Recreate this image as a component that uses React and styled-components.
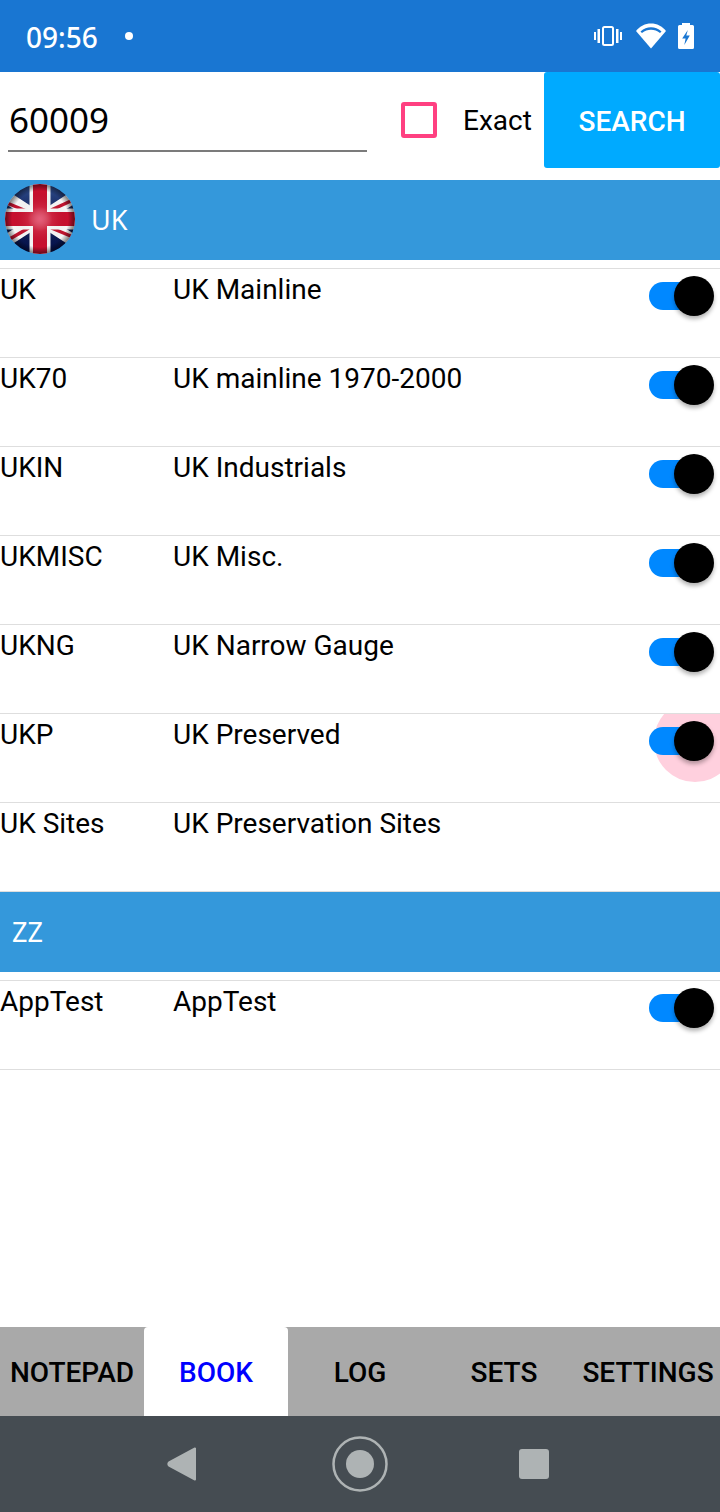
import React from "react";
import styled, { createGlobalStyle } from "styled-components";

const GlobalStyle = createGlobalStyle`
    html, body { margin: 0; padding: 0; background: #fff; }
    body { font-family: Roboto, sans-serif; color: #000; }
`;

const Screen = styled.div`
    width: 720px;
    height: 1512px;
    display: flex;
    flex-direction: column;
    overflow: hidden;
`;

const StatusBar = styled.div`
    height: 72px;
    flex: none;
    background: #1976d2;
    color: #fff;
    display: flex;
    align-items: center;
    padding: 0 26px 0 26px;
`;
const Clock = styled.span`
    font-family: "Noto Sans", sans-serif;
    font-size: 28px;
    font-weight: 500;
    line-height: 1;
    margin-top: 2px;
`;
const Dot = styled.span`
    width: 8px;
    height: 8px;
    border-radius: 50%;
    background: #fff;
    margin-left: 27px;
`;
const StatusIcons = styled.div`
    margin-left: auto;
    display: flex;
    align-items: center;
    gap: 14px;
`;

const SearchRow = styled.div`
    height: 96px;
    flex: none;
    display: flex;
    align-items: stretch;
    margin-bottom: 12px;
`;
const SearchField = styled.div`
    width: 359px;
    margin-left: 8px;
    height: 80px;
    border-bottom: 2px solid #7b7b7b;
    box-sizing: border-box;
    font-family: "Noto Sans", sans-serif;
    font-size: 35px;
    line-height: 96px;
    padding-left: 1px;
`;
const Check = styled.div`
    width: 36px;
    height: 36px;
    box-sizing: border-box;
    border: 4px solid #ff4081;
    border-radius: 3px;
    margin: 30px 0 0 34px;
`;
const ExactLabel = styled.span`
    font-size: 28px;
    line-height: 98px;
    margin-left: 26px;
`;
const SearchButton = styled.div`
    margin-left: auto;
    width: 176px;
    background: #00aaff;
    color: #fff;
    border-radius: 3px;
    font-size: 28px;
    font-weight: 500;
    display: flex;
    align-items: center;
    justify-content: center;
    padding-top: 2px;
    box-sizing: border-box;
`;

const GroupHeader = styled.div`
    height: 80px;
    flex: none;
    box-sizing: border-box;
    background: #3498db;
    color: #fff;
    display: flex;
    align-items: center;
    font-family: "Noto Sans", sans-serif;
    font-size: 27px;
    padding: 0 0 2px ${p => (p.$flag ? "5px" : "12px")};
    margin-bottom: 8px;
`;
const GroupTitle = styled.span`
    margin-left: ${p => (p.$flag ? "16px" : "0")};
`;

const List = styled.div`
    border-top: 1px solid #dedede;
`;
const Row = styled.div`
    height: 83px;
    border-bottom: 1px solid #dedede;
    position: relative;
    display: flex;
    font-size: 28px;
    line-height: 32px;
    padding-top: 5px;
`;
const Code = styled.span`
    width: 173px;
    flex: none;
`;
const Name = styled.span`
    flex: 1;
`;

const Toggle = styled.div`
    position: absolute;
    top: 13px;
    right: 6px;
    width: 65px;
    height: 28px;
`;
const Track = styled.div`
    position: absolute;
    left: 0;
    top: 0;
    width: 50px;
    height: 28px;
    border-radius: 14px;
    background: #0088ff;
`;
const Ripple = styled.div`
    position: absolute;
    left: 5px;
    top: -27px;
    width: 82px;
    height: 82px;
    border-radius: 50%;
    background: #ffd0de;
`;
const Clip = styled.div`
    position: absolute;
    inset: 0;
    overflow: hidden;
`;
const Knob = styled.div`
    position: absolute;
    left: 25px;
    top: -6px;
    width: 40px;
    height: 40px;
    border-radius: 50%;
    background: #000;
    box-shadow: 0 3px 4px rgba(0, 0, 0, 0.3);
`;

const Spacer = styled.div`
    flex: 1;
`;

const TabBar = styled.div`
    height: 89px;
    flex: none;
    background: #a9a9a9;
    display: grid;
    grid-template-columns: repeat(5, 144px);
`;
const Tab = styled.div`
    display: flex;
    align-items: center;
    justify-content: center;
    font-size: 28px;
    font-weight: 500;
    white-space: nowrap;
    padding-top: 2px;
    box-sizing: border-box;
    color: ${p => (p.$active ? "#0000ff" : "#000")};
    background: ${p => (p.$active ? "#fff" : "transparent")};
    border-radius: ${p => (p.$active ? "4px 4px 0 0" : "0")};
`;

const NavBar = styled.div`
    height: 96px;
    flex: none;
    background: #454c52;
    display: flex;
    align-items: center;
    justify-content: center;
`;

const FlagIcon = () => (
    <svg width="70" height="70" viewBox="0 0 70 70">
        <defs>
            <radialGradient id="gloss" cx="50%" cy="50%" r="50%">
                <stop offset="0" stopColor="#ff9cb8" stopOpacity="0.55" />
                <stop offset="0.35" stopColor="#fff" stopOpacity="0.08" />
                <stop offset="0.8" stopColor="#000" stopOpacity="0" />
                <stop offset="1" stopColor="#000" stopOpacity="0.5" />
            </radialGradient>
            <linearGradient id="navy" x1="0" y1="0" x2="0" y2="1">
                <stop offset="0" stopColor="#2f4f8f" />
                <stop offset="0.4" stopColor="#14265f" />
                <stop offset="1" stopColor="#030f48" />
            </linearGradient>
            <clipPath id="disc">
                <circle cx="35" cy="35" r="35" />
            </clipPath>
        </defs>
        <g clipPath="url(#disc)">
            <rect width="70" height="70" fill="url(#navy)" />
            <path d="M-2 11L72 59M72 11L-2 59" stroke="#f6f6f6" strokeWidth="12" />
            <path d="M2 19L26 29M68 16L44 27M3 56L27 42M68 53L44 43" stroke="#c0142f" strokeWidth="3.500" />
            <path d="M35 0V70M0 35H70" stroke="#f6f6f6" strokeWidth="21" />
            <path d="M35 0V70M0 35H70" stroke="#c8102e" strokeWidth="14" />
            <circle cx="35" cy="35" r="35" fill="url(#gloss)" />
        </g>
    </svg>
);

const VibrateIcon = () => (
    <svg width="28" height="20" viewBox="0 0 28 20" fill="#fff">
        <rect x="0" y="6" width="2" height="8" />
        <rect x="3.500" y="3" width="2.500" height="14" />
        <rect x="22" y="3" width="2.500" height="14" />
        <rect x="26" y="6" width="2" height="8" />
        <rect x="9" y="1" width="10" height="18" rx="1.500" fill="none" stroke="#fff" strokeWidth="2" />
    </svg>
);

const WifiIcon = () => (
    <svg width="30" height="26" viewBox="0 0 30 26">
        <path d="M15 25.500L0 8C4 3 9 .5 15 .5s11 2.500 15 7.500z" fill="#fff" />
        <path d="M4.500 8.500C8 5.500 11 4.300 15 4.300S22 5.500 25.500 8.500L24 10C21 7.800 18.500 6.800 15 6.800S9 7.800 6 10z" fill="#1976d2" />
    </svg>
);

const BatteryIcon = () => (
    <svg width="16" height="26" viewBox="0 0 16 26" style={{ marginLeft: -2 }}>
        <path d="M4 0h8v2h2.500a1.500 1.500 0 0 1 1.500 1.500V24.500a1.500 1.500 0 0 1-1.500 1.500H1.500A1.500 1.500 0 0 1 0 24.500V3.500A1.500 1.500 0 0 1 1.500 2H4z" fill="#fff" />
        <path d="M9.800 7L4.200 15.500h3.400L6.300 22l5.500-9.500H8.300z" fill="#1976d2" />
    </svg>
);

const BackIcon = () => (
    <svg width="30" height="34" viewBox="0 0 30 34">
        <path d="M28 1.500V32.500L2 18.500a2 2 0 0 1 0-3z" fill="#aeb3b4" stroke="#aeb3b4" strokeLinejoin="round" strokeWidth="2" />
    </svg>
);

const HomeIcon = () => (
    <svg width="56" height="56" viewBox="0 0 56 56">
        <circle cx="28" cy="28" r="26.500" fill="none" stroke="#aeb3b4" strokeWidth="2.500" />
        <circle cx="28" cy="28" r="14" fill="#aeb3b4" />
    </svg>
);

const StopIcon = styled.div`
    width: 30px;
    height: 30px;
    border-radius: 3px;
    background: #aeb3b4;
`;

const NavSlot = styled.div`
    width: 176px;
    box-sizing: border-box;
    padding-right: ${p => (p.$nudge ? "4px" : "0")};
    display: flex;
    justify-content: center;
`;

const ukRows = [
    ["UK", "UK Mainline", true],
    ["UK70", "UK mainline 1970-2000", true],
    ["UKIN", "UK Industrials", true],
    ["UKMISC", "UK Misc.", true],
    ["UKNG", "UK Narrow Gauge", true],
    ["UKP", "UK Preserved", true, true],
    ["UK Sites", "UK Preservation Sites", false],
];
const tabs = ["NOTEPAD", "BOOK", "LOG", "SETS", "SETTINGS"];

const ListRow = ({ code, name, on, pressed }) => (
    <Row>
        <Code>{code}</Code>
        <Name>{name}</Name>
        {pressed && (
            <Clip>
                <Toggle>
                    <Ripple />
                </Toggle>
            </Clip>
        )}
        {on && (
            <Toggle>
                <Track />
                <Knob />
            </Toggle>
        )}
    </Row>
);

const App = () => (
    <Screen>
        <GlobalStyle />
        <StatusBar>
            <Clock>09:56</Clock>
            <Dot />
            <StatusIcons>
                <VibrateIcon />
                <WifiIcon />
                <BatteryIcon />
            </StatusIcons>
        </StatusBar>
        <SearchRow>
            <SearchField>60009</SearchField>
            <Check />
            <ExactLabel>Exact</ExactLabel>
            <SearchButton>SEARCH</SearchButton>
        </SearchRow>
        <GroupHeader $flag>
            <FlagIcon />
            <GroupTitle $flag>UK</GroupTitle>
        </GroupHeader>
        <List>
            {ukRows.map(([code, name, on, pressed]) => (
                <ListRow key={code} code={code} name={name} on={on} pressed={pressed} />
            ))}
        </List>
        <GroupHeader>
            <GroupTitle>ZZ</GroupTitle>
        </GroupHeader>
        <List>
            <ListRow code="AppTest" name="AppTest" on />
        </List>
        <Spacer />
        <TabBar>
            {tabs.map(t => (
                <Tab key={t} $active={t === "BOOK"}>{t}</Tab>
            ))}
        </TabBar>
        <NavBar>
            <NavSlot $nudge><BackIcon /></NavSlot>
            <NavSlot><HomeIcon /></NavSlot>
            <NavSlot $nudge><StopIcon /></NavSlot>
        </NavBar>
    </Screen>
);

export default App;
